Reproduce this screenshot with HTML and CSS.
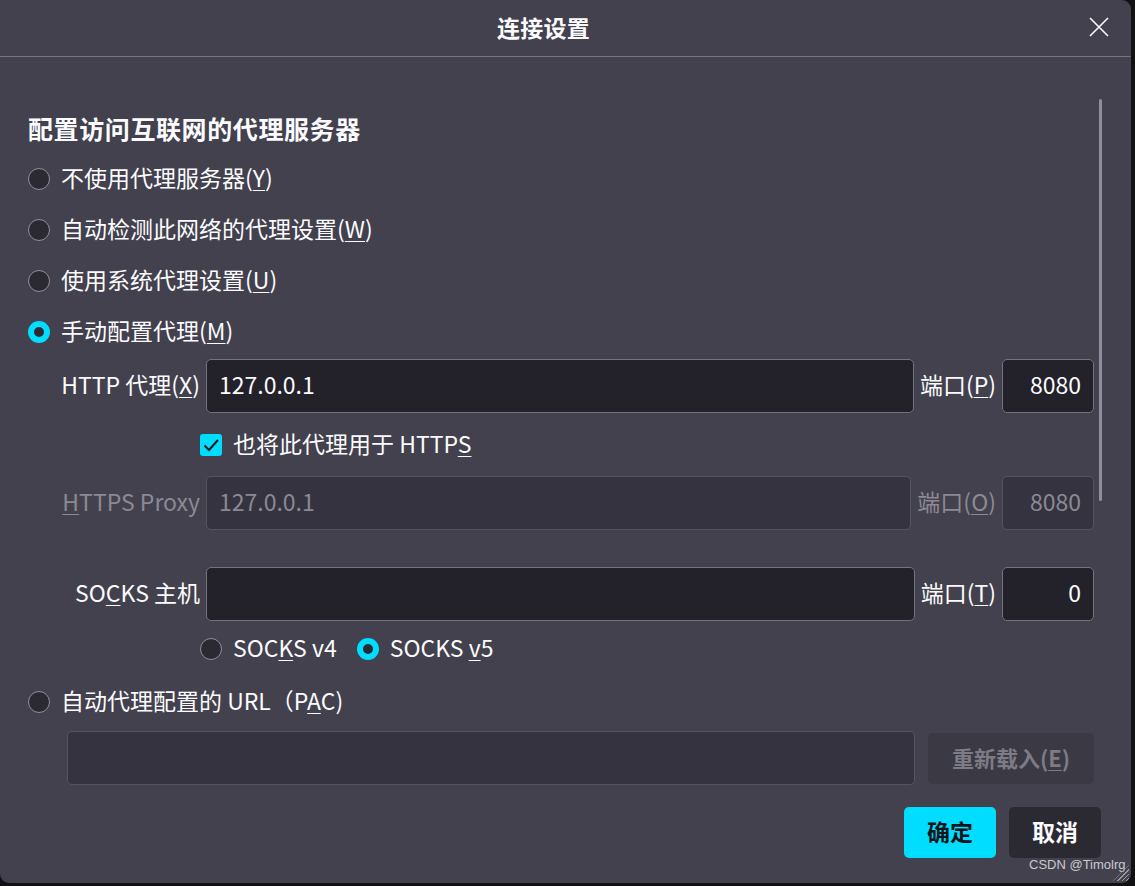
FILE: index.html
```html
<!DOCTYPE html>
<html lang="zh-CN">
<head>
<meta charset="utf-8">
<title>连接设置</title>
<link rel="stylesheet" href="styles.css">
</head>
<body>
<div class="dialog">
  <div class="header">
    <span class="title">连接设置</span>
    <span class="close" aria-label="关闭">
      <svg width="20" height="20" viewBox="0 0 20 20"><path d="M1 1 L19 19 M19 1 L1 19" stroke="#fbfbfe" stroke-width="1.6" fill="none"/></svg>
    </span>
  </div>
  <div class="scrollbar"></div>
  <div class="content">
    <h1 class="heading">配置访问互联网的代理服务器</h1>
    <div class="radio-row"><span class="radio"></span><span class="txt">不使用代理服务器(<u>Y</u>)</span></div>
    <div class="radio-row"><span class="radio"></span><span class="txt">自动检测此网络的代理设置(<u>W</u>)</span></div>
    <div class="radio-row"><span class="radio"></span><span class="txt">使用系统代理设置(<u>U</u>)</span></div>
    <div class="radio-row"><span class="radio checked"></span><span class="txt">手动配置代理(<u>M</u>)</span></div>

    <div class="field-row first">
      <span class="label">HTTP 代理(<u>X</u>)</span>
      <div class="input">127.0.0.1</div>
      <span class="port-label">端口(<u>P</u>)</span>
      <div class="input port">8080</div>
    </div>
    <div class="check-row">
      <span class="checkbox"><svg width="22" height="22" viewBox="0 0 22 22"><path d="M4.5 11.5 L9 16 L18 6" stroke="#15141a" stroke-width="2" fill="none"/></svg></span>
      <span class="txt">也将此代理用于 HTTP<u>S</u></span>
    </div>
    <div class="field-row disabled">
      <span class="label"><u>H</u>TTPS Proxy</span>
      <div class="input">127.0.0.1</div>
      <span class="port-label">端口(<u>O</u>)</span>
      <div class="input port">8080</div>
    </div>
    <div class="field-row socks">
      <span class="label">SO<u>C</u>KS 主机</span>
      <div class="input"></div>
      <span class="port-label">端口(<u>T</u>)</span>
      <div class="input port">0</div>
    </div>
    <div class="version-row">
      <span class="radio"></span><span class="txt ver">SOC<u>K</u>S v4</span>
      <span class="radio checked"></span><span class="txt">SOCKS <u>v</u>5</span>
    </div>
    <div class="radio-row pac"><span class="radio"></span><span class="txt">自动代理配置的 URL（P<u>A</u>C)</span></div>
    <div class="pac-row">
      <div class="input disabled-input"></div>
      <button class="reload">重新载入(<u>E</u>)</button>
    </div>
  </div>
  <div class="buttons">
    <button class="btn primary">确定</button>
    <button class="btn secondary">取消</button>
  </div>
  <span class="watermark">CSDN @Timolrg</span>
  <span class="grip"></span>
</div>
</body>
</html>
```
FILE: styles.css
```css
html, body {
  margin: 0;
  padding: 0;
  background: #111113;
  width: 1135px;
  height: 886px;
  overflow: hidden;
}

.dialog {
  position: relative;
  width: 1131px;
  height: 883px;
  background: #42414d;
  border-radius: 0 9px 9px 9px;
  color: #fbfbfe;
  font-family: "Noto Sans CJK SC", "Noto Sans", sans-serif;
  font-size: 23px;
  display: flex;
  flex-direction: column;
  box-sizing: border-box;
}

u {
  text-decoration-thickness: 1px;
  text-underline-offset: 3px;
}

.txt,
.label,
.port-label {
  padding-bottom: 4px;
}

.header {
  position: relative;
  height: 56px;
  border-bottom: 1px solid #76757f;
  display: flex;
  align-items: center;
  justify-content: center;
  flex: none;
}

.title {
  font-size: 23px;
  font-weight: 700;
  margin-right: 44px;
  padding-bottom: 3px;
  letter-spacing: 0.3px;
}

.close {
  position: absolute;
  right: 22px;
  top: 17px;
  width: 20px;
  height: 20px;
  display: block;
}
.close svg { display: block; }

.scrollbar {
  position: absolute;
  left: 1099px;
  top: 99px;
  width: 3px;
  height: 402px;
  border-radius: 2px;
  background: #8f8f9d;
}

.content {
  padding: 55px 37px 0 28px;
  flex: none;
}

.heading {
  margin: 0;
  font-size: 25px;
  line-height: 32px;
  height: 34px;
  font-weight: 700;
  letter-spacing: 0.6px;
}

.radio-row {
  display: flex;
  align-items: center;
  height: 51px;
  gap: 11px;
  line-height: 30px;
}
.heading + .radio-row { margin-top: 7px; }

.radio {
  flex: none;
  width: 22px;
  height: 22px;
  box-sizing: border-box;
  border-radius: 50%;
  background: #2b2a33;
  border: 1px solid #8f8f9d;
}
.radio.checked {
  border: 6px solid #00ddff;
  background: #2b2a33;
}

.field-row {
  display: flex;
  align-items: center;
  gap: 6px;
  height: 54px;
}
.field-row.first { margin-top: 2px; }
.field-row.socks { margin-top: 37px; }

.label {
  width: 172px;
  flex: none;
  text-align: right;
  white-space: nowrap;
}

.input {
  flex: 1;
  height: 54px;
  box-sizing: border-box;
  border: 1px solid #73727d;
  border-radius: 5px;
  background: #23222b;
  padding: 0 12px 4px;
  display: flex;
  align-items: center;
  color: #fbfbfe;
}
.input.port {
  flex: none;
  width: 92px;
  justify-content: flex-end;
}
.port-label {
  flex: none;
  white-space: nowrap;
}

.field-row.disabled .label,
.field-row.disabled .port-label,
.field-row.disabled .input {
  color: #8b8a94;
}
.field-row.disabled .input,
.disabled-input {
  background: #35333f;
  border-color: #55545f;
}

.check-row {
  display: flex;
  align-items: center;
  height: 63px;
  padding-left: 172px;
  gap: 11px;
}
.checkbox {
  flex: none;
  width: 22px;
  height: 22px;
  border-radius: 3px;
  background: #00ddff;
  display: block;
}
.checkbox svg { display: block; }

.version-row {
  display: flex;
  align-items: center;
  height: 56px;
  padding-left: 172px;
  gap: 11px;
}
.version-row .ver { margin-right: 9px; }

.radio-row.pac { height: 50px; }

.pac-row {
  display: flex;
  align-items: center;
  margin-top: 4px;
  padding-left: 39px;
  gap: 13px;
}
.pac-row .input { height: 54px; }

.reload {
  flex: none;
  width: 166px;
  height: 51px;
  border: none;
  border-radius: 5px;
  background: #3a3944;
  color: #7d7c86;
  font-family: inherit;
  font-size: 22px;
  font-weight: 700;
  padding: 0 0 3px;
}

.buttons {
  display: flex;
  justify-content: flex-end;
  gap: 13px;
  padding-right: 30px;
  margin-top: 22px;
}
.btn {
  width: 92px;
  height: 51px;
  border: none;
  border-radius: 5px;
  font-family: inherit;
  font-size: 23px;
  font-weight: 700;
  padding: 0 0 3px;
}
.btn.primary {
  background: #00ddff;
  color: #15141a;
}
.btn.secondary {
  background: #2b2a33;
  color: #fbfbfe;
}

.watermark {
  position: absolute;
  left: 1029px;
  top: 856px;
  font-family: "Liberation Sans", sans-serif;
  font-size: 13px;
  color: #c9c9cf;
  line-height: 18px;
}

.grip {
  position: absolute;
  right: 2px;
  bottom: 2px;
  width: 16px;
  height: 16px;
  background: repeating-linear-gradient(135deg, transparent 0 2px, #9a9aa2 2px 3px);
  clip-path: polygon(100% 0, 100% 100%, 0 100%);
}
```
